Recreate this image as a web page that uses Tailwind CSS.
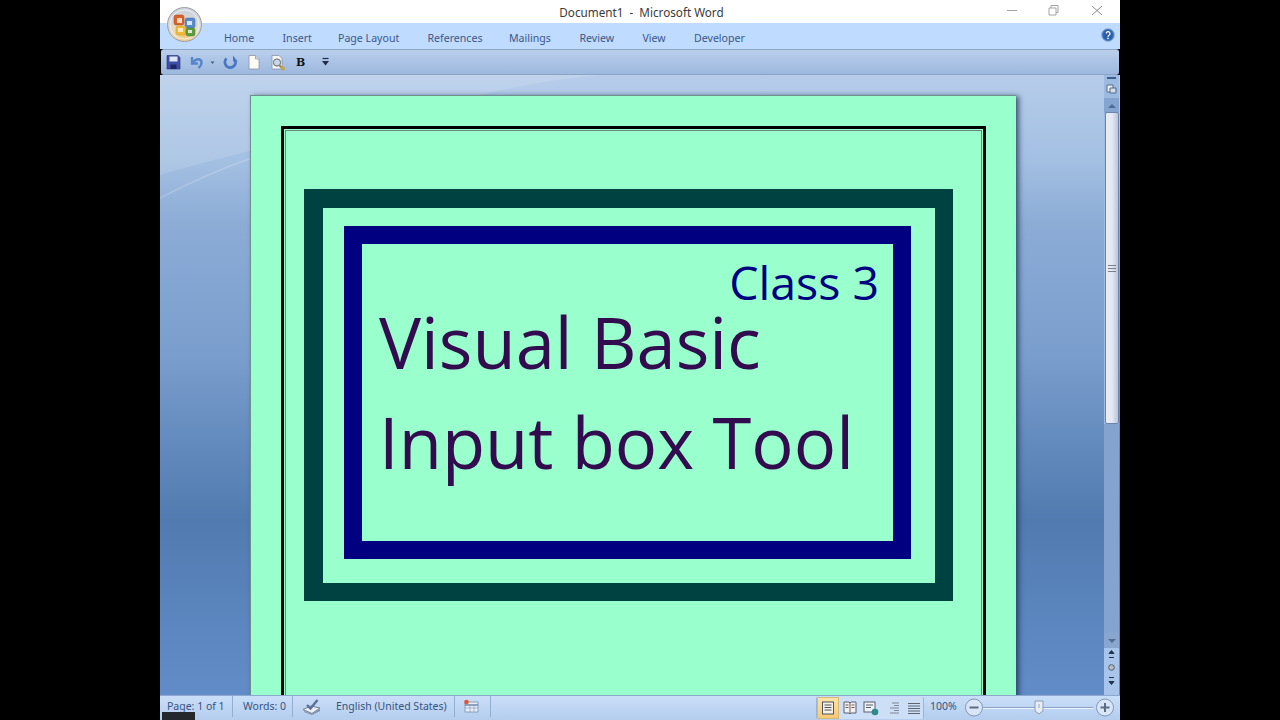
<!DOCTYPE html>
<html>
<head>
<meta charset="utf-8">
<script src="https://cdn.jsdelivr.net/npm/@tailwindcss/browser@4"></script>
</head>
<body class="bg-black">
<div class="w-[1280px] h-[720px] overflow-hidden bg-black flex justify-center font-['Open_Sans',sans-serif]">
  <div class="relative w-[960px] h-[720px] flex flex-col overflow-hidden">
    <!-- title bar -->
    <div class="relative h-[23px] bg-white flex items-center justify-center text-[11.700px] text-[#3a3a3a] shrink-0 font-['Noto_Sans',sans-serif] pt-[2px]">
      <span class="ml-[3px] whitespace-pre">Document1  -  Microsoft Word</span>
      <svg class="absolute left-[840px] top-0" width="110" height="23" fill="none" stroke="#a4a4a4" stroke-width="1">
        <path d="M7 10.500h10"/>
        <path d="M49 8h7v7h-7z M51 8V5.500h7v7h-2"/>
        <path d="M92 6l10 9M102 6l-10 9" stroke="#8a8a8a"/>
      </svg>
    </div>
    <!-- tabs -->
    <div class="relative h-[26px] bg-[#bfdbff] flex items-center pl-[64px] pt-[5px] shrink-0 text-[10.600px] text-[#3b5887] font-['Noto_Sans',sans-serif]">
      <span class="w-[58.500px]">Home</span>
      <span class="w-[55.500px]">Insert</span>
      <span class="w-[89.500px]">Page Layout</span>
      <span class="w-[81.500px]">References</span>
      <span class="w-[70.500px]">Mailings</span>
      <span class="w-[63px]">Review</span>
      <span class="w-[51.500px]">View</span>
      <span>Developer</span>
      <svg class="absolute left-[941px] top-[5px]" width="14" height="14" viewBox="0 0 14 14">
        <circle cx="7" cy="7" r="6.500" fill="#3a72bf" stroke="#9fb8dc"/>
        <circle cx="7" cy="7" r="4.800" fill="#2a5ea8"/>
        <path d="M5.200 5.500a1.900 1.900 0 1 1 2.800 1.700c-.7.400-1 .8-1 1.500" fill="none" stroke="#fff" stroke-width="1.300"/>
        <circle cx="7" cy="10.400" r="0.800" fill="#fff"/>
      </svg>
    </div>
    <!-- office button -->
    <svg class="absolute left-[7px] top-[7px]" width="36" height="36" viewBox="0 0 36 36">
      <defs>
        <radialGradient id="orb" cx="50%" cy="85%" r="70%">
          <stop offset="0" stop-color="#f0c87c"/>
          <stop offset=".55" stop-color="#e9dcc4"/>
          <stop offset="1" stop-color="#cfd4dc"/>
        </radialGradient>
      </defs>
      <circle cx="17.500" cy="17.500" r="17" fill="url(#orb)" stroke="#9aa0a8"/>
      <circle cx="17.500" cy="17.500" r="14.500" fill="none" stroke="#f7f7f7" stroke-opacity=".8"/>
      <rect x="7" y="8" width="10" height="10" rx="2" fill="#d9622b" stroke="#b5451b" stroke-width=".5"/>
      <rect x="10" y="11" width="5" height="5" fill="#f1d9c4"/>
      <rect x="18" y="11" width="10" height="10" rx="2" fill="#5a8bc9" stroke="#3d6ba8" stroke-width=".5"/>
      <rect x="20" y="14" width="5" height="4" fill="#d8e5f5"/>
      <rect x="9" y="19" width="10" height="9" rx="2" fill="#f0bb3c" stroke="#d39b24" stroke-width=".5"/>
      <rect x="11" y="21" width="5" height="4" fill="#f8e9bc"/>
      <rect x="19" y="21" width="9" height="8" rx="2" fill="#5d9c3f" stroke="#467e2c" stroke-width=".5"/>
      <rect x="21" y="23" width="4" height="3" fill="#dcebd0"/>
    </svg>
    <!-- quick access -->
    <div class="h-[26px] shrink-0 bg-gradient-to-b from-[#b9cfec] to-[#9db8de] border-y border-[#8ea4c4] rounded-[3px] ml-px mr-px flex items-center">
      <svg width="180" height="24" viewBox="0 0 180 24">
        <path d="M6 5.500h11l2 2v11.500H6z" fill="#3f4fa8" stroke="#28306e" stroke-width=".6"/>
        <rect x="8.500" y="6.500" width="8" height="5" fill="#dfe6f5"/>
        <rect x="9.500" y="14.500" width="6" height="4.500" fill="#1e2a63"/>
        <path d="M31 7v6.500h6" fill="none" stroke="#5685cc" stroke-width="2.400"/>
        <path d="M32 12.500c3-4.500 8-4 8.500-.5.300 2.500-1.500 4.500-3 6" fill="none" stroke="#5685cc" stroke-width="2.400"/>
        <path d="M49.500 11.500h4l-2 2.500z" fill="#46608c"/>
        <path d="M65.500 8.500a5.300 5.300 0 1 0 8.500 1.500" fill="none" stroke="#4a76c2" stroke-width="2.800"/>
        <path d="M72 5.500v6h4.500z" fill="#4a76c2"/>
        <path d="M88 5.500h6.500l3.500 3.500v10H88z" fill="#fbfbf4" stroke="#8c94a8" stroke-width=".8"/>
        <path d="M94.500 5.500v3.500h3.500" fill="#d8dce6" stroke="#8c94a8" stroke-width=".7"/>
        <path d="M111 5.500h7l3 3v10.500h-10z" fill="#f4f4f2" stroke="#8c94a8" stroke-width=".8"/>
        <circle cx="116" cy="12.500" r="3.600" fill="#c7d8ea" stroke="#66666c"/>
        <path d="M118.500 15.500l2.500 2.500" stroke="#a08a40" stroke-width="2"/>
        <circle cx="122" cy="18.500" r="2" fill="#c0a850"/>
        <path d="M161.500 8.500h6" stroke="#1d2d4a" stroke-width="1.200"/>
        <path d="M161 11h7l-3.500 4.500z" fill="#1d2d4a"/>
        <text x="135" y="16" font-family="'DejaVu Serif',serif" font-weight="700" font-size="11" fill="#111">B</text>
      </svg>
    </div>
    <!-- document area -->
    <div class="relative flex-1 min-h-0 flex overflow-hidden bg-[linear-gradient(180deg,#b6cdea_0%,#a3bfe2_14%,#8cacd6_24%,#7a9ecd_45%,#5f87ba_62%,#517bb0_72%,#5c87c0_90%,#618cc7_100%)]">
      <svg class="absolute left-0 top-0" width="460" height="140" viewBox="0 0 460 140">
        <path d="M0 100C90 73 230 45 320 20C360 10 400 4 440 0H0z" fill="#ffffff" fill-opacity=".13"/>
        <path d="M0 123C35 105 65 92 95 82" fill="none" stroke="#ffffff" stroke-opacity=".2" stroke-width="1.500"/>
      </svg>
      <!-- page -->
      <div class="relative ml-[90px] mt-[20px] w-[766px] h-[640px] shrink-0 bg-[#99ffcc] border-t border-l border-[#6f8f8c] shadow-[3px_1px_5px_rgba(30,50,80,0.75)] pl-[30px] pt-[30px]">
        <div class="w-[705px] h-[620px] border-[3px] border-black p-px">
          <div class="h-full border border-[#6a8a80] pl-[18px] pt-[58px]">
            <div class="w-[649px] h-[412px] border-t-[19px] border-l-[19px] border-r-[18px] border-b-[18px] border-[#004242] pl-[21px] pt-[18px]">
              <div class="w-[567px] h-[333px] border-[18px] border-[#000080] relative">
                <p class="absolute right-[14px] top-[6px] text-[46.500px] leading-[64px] text-[#000080] font-['Open_Sans',sans-serif]">Class 3</p>
                <div class="pl-[17px] pt-[48px] text-[#330b4f] text-[70.500px] leading-[100px] font-['Open_Sans',sans-serif] whitespace-nowrap">
                  <p>Visual Basic</p>
                  <p>Input box Tool</p>
                </div>
              </div>
            </div>
          </div>
        </div>
      </div>
      <!-- scrollbar -->
      <div class="absolute right-[1px] top-0 bottom-0 w-[15px] bg-[#9dbae0] flex flex-col items-center">
        <div class="w-[9px] h-[2px] bg-[#3e5f8c] mt-[2px]"></div>
        <svg class="mt-[3px]" width="13" height="13" viewBox="0 0 13 13"><path d="M2 3h6v7H2z" fill="#eef2f8" stroke="#536a8c"/><path d="M5 6h6v5H5z" fill="#d5dee9" stroke="#536a8c"/></svg>
        <div class="w-full h-[15px] mt-[3px] flex justify-center items-center bg-[#85a5d0]"><div class="w-0 h-0 border-x-[4px] border-x-transparent border-b-[4px] border-b-[#4e6d99]"></div></div>
        <div class="w-[14px] h-[312px] -mt-[1px] shrink-0 rounded-[2px] border border-[#6d84ac] bg-gradient-to-r from-[#e6ebf5] via-[#e4e9f3] to-[#b8c5dc] flex items-center justify-center">
          <div class="w-[8px] h-[7px] border-y border-[#7a7f88] flex items-center"><div class="w-full h-px bg-[#7a7f88]"></div></div>
        </div>
        <div class="flex-1 w-full bg-[#85a3cf]"></div>
        <div class="w-full h-[15px] flex justify-center items-center bg-[#8aa6cf]"><div class="w-0 h-0 border-x-[4px] border-x-transparent border-t-[4px] border-t-[#4e6d99]"></div></div>
        <svg class="bg-[#a9c4ea]" width="15" height="47" viewBox="0 0 15 47">
          <path d="M5 5.500h5M5 9.500h5M7.500 2.500l-2.500 3h5z" stroke="#23344f" fill="#23344f"/>
          <circle cx="7.500" cy="19.500" r="2.800" fill="#b9bfc7" stroke="#4f5a68"/>
          <path d="M5 29.500h5M5 33.500h5M7.500 36.500l-2.500-3h5z" stroke="#23344f" fill="#23344f"/>
        </svg>
      </div>
    </div>
    <!-- status bar -->
    <div class="relative h-[25px] shrink-0 bg-gradient-to-b from-[#c9def8] to-[#b4cdee] border-t border-[#8ea9cd] flex items-center pb-[3px] text-[10.500px] text-[#37547f] font-['Noto_Sans',sans-serif]">
      <span class="w-[73px] pl-[7px] border-r border-[#94aed0] leading-[21px]">Page: 1 of 1</span>
      <span class="w-[60px] pl-[10px] border-r border-[#94aed0] leading-[21px]">Words: 0</span>
      <svg class="ml-[9px]" width="20" height="18" viewBox="0 0 20 18">
        <path d="M1 11.500l8-3.500 9 2-8 5.500z" fill="#e9edf4" stroke="#66738a" stroke-width=".9"/>
        <path d="M2 13l8 3 8-5v2l-8 4-8-3z" fill="#7d8ea8"/>
        <path d="M5 7l3.500 3.500 7-8.500" fill="none" stroke="#5a7096" stroke-width="2.400"/>
      </svg>
      <span class="ml-[14px] w-[119px] border-r border-[#94aed0] leading-[21px]">English (United States)</span>
      <svg class="ml-[8px]" width="16" height="16" viewBox="0 0 16 16">
        <rect x="2" y="3" width="13" height="10" fill="#e6eef8" stroke="#7b8fae" stroke-width=".8"/>
        <path d="M2 6h13" stroke="#6f86aa" stroke-width="1.500"/>
        <path d="M2 9h13M7 6v7M11 6v7" stroke="#8f9fb8" stroke-width=".7"/>
        <circle cx="3.500" cy="3" r="2.300" fill="#e0553a"/>
      </svg>
      <div class="ml-[11px] w-px h-[21px] bg-[#94aed0]"></div>
      <!-- view buttons -->
      <div class="absolute left-[656px] top-[1px] h-[22px] flex items-center bg-[#cddff6] border-x border-[#9db5d4] rounded-[2px]">
        <div class="w-[22px] h-[22px] bg-gradient-to-b from-[#fde5a8] to-[#f6c874] border border-[#d8b878] flex items-center justify-center">
          <svg width="14" height="14" viewBox="0 0 14 14"><rect x="1.500" y="1" width="11" height="12" fill="#f5f1e3" stroke="#4c5462"/><path d="M3.500 4h7M3.500 6.500h7M3.500 9h7" stroke="#4c5462"/></svg>
        </div>
        <svg class="ml-[4px]" width="14" height="16" viewBox="0 0 14 16"><path d="M1 2h5l1 1 1-1h5v11H8l-1 1-1-1H1z" fill="#eef1f5" stroke="#59616e"/><path d="M7 3v10M2.500 5h3M2.500 7.500h3M8.500 5h3M8.500 7.500h3" stroke="#7b5c4c"/></svg>
        <svg class="ml-[6px]" width="16" height="16" viewBox="0 0 16 16"><rect x="1" y="2" width="11" height="10" fill="#eef1f5" stroke="#59616e"/><path d="M3 5h7M3 7.500h5" stroke="#59616e"/><circle cx="12" cy="12" r="3.300" fill="#2b8a8c"/></svg>
        <svg class="ml-[8px]" width="14" height="14" viewBox="0 0 14 14"><path d="M5 2h7M7 4.500h5M3 7h9M7 9.500h5M3 12h9" stroke="#7f8793"/></svg>
        <svg class="ml-[6px] mr-[2px]" width="14" height="14" viewBox="0 0 14 14"><path d="M1 2.500h12M1 5h12M1 7.500h12M1 10h12M1 12.500h12" stroke="#5d6571"/></svg>
      </div>
      <span class="absolute left-[770px] top-[2px] leading-[16px]">100%</span>
      <!-- zoom -->
      <svg class="absolute left-[803px] top-0" width="157" height="24" viewBox="0 0 157 24">
        <path d="M20 11.500h110" stroke="#8aa3c6"/>
        <path d="M20 12.500h110" stroke="#eef4fc"/>
        <circle cx="11" cy="11.500" r="8.500" fill="#d9e6f7" stroke="#7f97b8"/>
        <path d="M6.500 11.500h9" stroke="#5c6c84" stroke-width="2"/>
        <path d="M72 5h8v10l-4 3-4-3z" fill="#e6edf7" stroke="#8b9cb5"/>
        <path d="M76 8v4" stroke="#9aa7ba"/>
        <circle cx="142" cy="11.500" r="8.500" fill="#d9e6f7" stroke="#7f97b8"/>
        <path d="M137.500 11.500h9M142 7v9" stroke="#5c6c84" stroke-width="2"/>
      </svg>
      <div class="absolute left-[2px] top-[16px] w-[33px] h-[10px] bg-[#24282c]"></div>
    </div>
  </div>
</div>
</body>
</html>
